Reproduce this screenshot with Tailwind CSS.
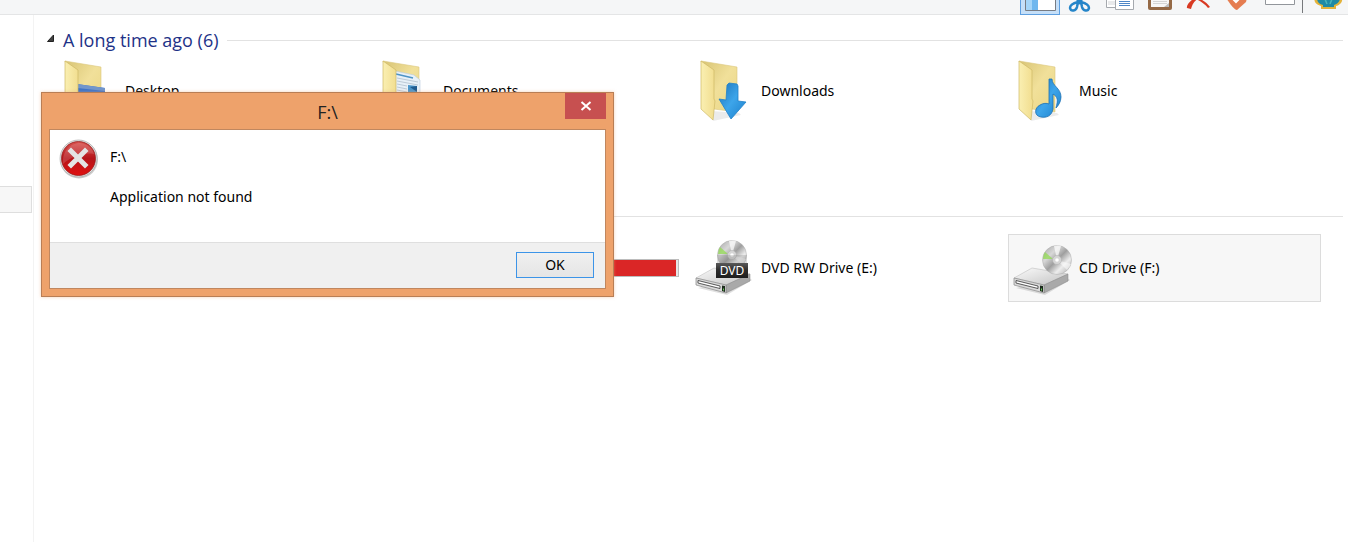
<!DOCTYPE html>
<html lang="en">
<head>
    <meta charset="UTF-8">
    <meta name="viewport" content="width=device-width, initial-scale=1.0">
    <title>File Explorer</title>
    <script src="https://cdn.jsdelivr.net/npm/@tailwindcss/browser@4"></script>
</head>
<body class="relative flex flex-col min-h-screen overflow-hidden bg-white text-black text-[14px] leading-5 font-['Noto_Sans','Open_Sans',sans-serif]">

    <!-- Shared gradients and shapes -->
    <svg class="absolute w-0 h-0" aria-hidden="true">
        <defs>
            <linearGradient id="cover" x1="0" x2="1"><stop offset="0" stop-color="#faefb2"/><stop offset="1" stop-color="#f1dd8e"/></linearGradient>
            <linearGradient id="back" x1="0" y1="0" x2="1" y2="1"><stop offset="0" stop-color="#d8c474"/><stop offset=".5" stop-color="#f1e09a"/><stop offset="1" stop-color="#ead684"/></linearGradient>
            <linearGradient id="blue" x1="0" y1="0" x2="1" y2="1"><stop offset="0" stop-color="#1c72b8"/><stop offset=".5" stop-color="#3da5ea"/><stop offset="1" stop-color="#1b7fcb"/></linearGradient>
            <linearGradient id="disc" x1="0" y1="0" x2="1" y2="1"><stop offset="0" stop-color="#a2a2a2"/><stop offset=".3" stop-color="#d8d8d8"/><stop offset=".5" stop-color="#9f9f9f"/><stop offset=".7" stop-color="#ededed"/><stop offset="1" stop-color="#a5a5a5"/></linearGradient>
            <linearGradient id="metal" x1="0" y1="0" x2="1" y2="1"><stop offset="0" stop-color="#fbfbfb"/><stop offset="1" stop-color="#c2c2c2"/></linearGradient>
            <linearGradient id="label" x1="0" y1="0" x2="0" y2="1"><stop offset="0" stop-color="#5a5a5a"/><stop offset=".5" stop-color="#2c2c2c"/><stop offset="1" stop-color="#1e1e1e"/></linearGradient>
            <linearGradient id="red" x1="0" y1="0" x2="0" y2="1"><stop offset="0" stop-color="#d8504c"/><stop offset=".5" stop-color="#b5151a"/><stop offset="1" stop-color="#e01010"/></linearGradient>
            <g id="folder-back">
                <path d="M16 52 43 54 45 56 17 62Z" fill="#000" opacity=".08"/>
                <path d="M5 2 41 8V53L18 50Z" fill="url(#back)" stroke="#dcc87e" stroke-width=".6"/>
            </g>
            <path id="folder-cover" d="M5 2 18 11V40L19 42 17 61 5 50Z" fill="url(#cover)" stroke="#cfb966" stroke-width=".7"/>
            <g id="drive">
                <path d="M4 52 33 59 58 44 52 40Z" fill="#000" opacity=".12"/>
                <path d="M2 42 20 32 56 38 32 49Z" fill="url(#metal)" stroke="#b5b5b5" stroke-width=".5"/>
                <path d="M32 49 56 38V45L32 57Z" fill="#a9a9a9" stroke="#858585" stroke-width=".5"/>
                <path d="M2 42 32 49V57L2 49Z" fill="#d9d9d9" stroke="#888" stroke-width=".7"/>
                <path d="M4 44.500 26 50V52.500L4 47Z" fill="#fff" stroke="#333" stroke-width=".8"/>
                <path d="M28 49.500 31 50V56L28 55Z" fill="#1d2b1d"/>
                <path d="M29 52.500h1v2h-1z" fill="#6bd35b"/>
            </g>
            <g id="cd">
                <circle r="14.500" fill="url(#disc)" stroke="#aaa" stroke-width=".5"/>
                <path d="M-4-1-14-1A14.500 14.500 0 0 1-12-8Z" fill="#8fdc4c" opacity=".7"/>
                <path d="M0 0-3-14A14.500 14.500 0 0 1 4-14Z" fill="#fff" opacity=".7"/>
                <path d="M0 0 14 4A14.500 14.500 0 0 1 10 10Z" fill="#fff" opacity=".5"/>
                <circle r="4.500" fill="#d5d5d5" stroke="#b2b2b2" stroke-width=".6"/>
                <circle r="1.800" fill="#fff"/>
            </g>
        </defs>
    </svg>

    <!-- Toolbar -->
    <header class="flex justify-end h-[15px] bg-[#f5f6f7] border-b border-[#e4e5e6]">
        <button aria-label="Preview pane" class="w-10 h-[15px] bg-[#c5dff8] border border-t-0 border-[#5e9fe0]">
            <svg class="block" width="38" height="14"><path d="M4.500-1H34.500V10.500H4.500Z" fill="#fff" stroke="#777c84"/><path d="M5 0h12v10H5z" fill="#6fb7ee"/><path d="M5 0h6v10H5z" fill="#a5d5f8"/></svg>
        </button>
        <button aria-label="Cut" class="w-10 h-[14px]">
            <svg class="block" width="40" height="14" fill="none" stroke="#2585c9" stroke-width="2.500"><path d="M16-2 21 4M23-2 18 4"/><path d="M18 2C14 3 10 5 10 8 11 12 16 11 17 7ZM21 2C25 3 29 5 29 8 28 12 23 11 22 7Z"/></svg>
        </button>
        <button aria-label="Copy" class="w-10 h-[14px]">
            <svg class="block" width="40" height="14" stroke="#a5a9ae" fill="#fff"><path d="M6.500-1H23V7.500H6.500Z"/><path d="M8 2h7M8 4h7" stroke="#d2d4d7"/><path d="M15.500-1H33.500V9.500H15.500Z"/><path d="M19 1.500H30M19 3.500H30M19 5.500H30" stroke="#4e86c6"/></svg>
        </button>
        <button aria-label="Paste" class="w-10 h-[14px]">
            <svg class="block" width="40" height="14"><path d="M8-2H32V8Q32 10 30 10H10Q8 10 8 8Z" fill="#946946"/><path d="M11-1H29V7H11Z" fill="#f7f7f7"/><path d="M13 1.500H27M13 3.500H27" stroke="#d5d5d5"/><path d="M24 7 29 3V7Z" fill="#bbb"/></svg>
        </button>
        <button aria-label="Delete" class="w-10 h-[14px]">
            <svg class="block" width="40" height="14"><path d="M19-2C14 1 12 5 11 9L7 8C6 5 11 0 15-2Z" fill="#d83a23"/><path d="M18-2C23 0 27 3 30 7L28 8C25 4 20 1 16-1Z" fill="#d83a23"/></svg>
        </button>
        <button aria-label="Properties" class="w-10 h-[14px]">
            <svg class="block" width="40" height="14"><path d="M6-2H27L26 2 17 10Q15 10 11 5Z" fill="#e57d51"/><path d="M12-2 16 2 20-2" fill="none" stroke="#fff" stroke-width="2"/></svg>
        </button>
        <button aria-label="Rename" class="w-10 h-[14px]">
            <svg class="block" width="40" height="14"><path d="M5.500-1H34.500V4.500H5.500Z" fill="#fff" stroke="#92969b"/></svg>
        </button>
        <div class="w-px h-[13px] mx-[2px] bg-[#77797c]"></div>
        <button aria-label="Shell options" class="w-[43px] h-[14px]">
            <svg class="block" width="43" height="14"><path d="M10-2H37C38 2 35 5 31 6V9H16V6C12 5 8 2 10-2Z" fill="#e3b33a"/><path d="M12-2H35C35 2 32 4 29 5V7H18V5C14 4 12 2 12-2Z" fill="#1f8aa5"/><path d="M20-1 22 4M27-1 25 4" stroke="#4bb5bb" stroke-width="1.500"/></svg>
        </button>
    </header>

    <div class="flex grow">
        <!-- Navigation pane -->
        <aside class="w-[34px] shrink-0 border-r border-[#f3f3f3]">
            <div class="w-8 h-[27px] mt-[171px] bg-[#f7f7f7] border border-l-0 border-[#dedede]"></div>
        </aside>

        <main class="grow pl-[11px] pr-[5px] pt-3">
            <!-- Folders -->
            <section class="h-[189px]">
                <h2 class="flex items-center h-[26px] text-[18px] leading-6 text-[#1e3287] font-['Open_Sans',sans-serif]">
                    <svg class="shrink-0 mr-2" width="10" height="12" aria-hidden="true"><path d="M8.500 1V7.500H2.500Z" fill="#404040" stroke="#222"/></svg>
                    A long time ago (6)
                    <span class="grow h-px ml-2 bg-[#e2e2e2]"></span>
                </h2>
                <ul class="grid grid-cols-[repeat(auto-fill,313px)] gap-x-[5px] pl-[9px] pt-1">
                    <li class="flex items-center h-[68px] pl-[6px]">
                        <svg class="w-16 h-16 mr-px" viewBox="0 0 64 64" aria-hidden="true"><use href="#folder-back"/><path d="M17 25 45 29V50L17 54Z" fill="#3b74cb"/><path d="M17 25 45 29V32L17 29Z" fill="#7196cc"/><use href="#folder-cover"/></svg>
                        Desktop
                    </li>
                    <li class="flex items-center h-[68px] pl-[6px]">
                        <svg class="w-16 h-16 mr-px" viewBox="0 0 64 64" aria-hidden="true"><use href="#folder-back"/><path d="M17 12 36 16 42 21V53L18 50Z" fill="#e7f0f8" stroke="#b9cbdc" stroke-width=".6"/><path d="M18 15 35 19" stroke="#4d94c6" stroke-width="1.500"/><path d="M19 19 40 23M19 22 40 26M19 25 29 27M19 28 29 30M19 31 29 33" stroke="#bccad7"/><path d="M30 26 39 27V39H30Z" fill="#4b96cb"/><path d="M32 28 39 33V27Z" fill="#205b8f"/><use href="#folder-cover"/></svg>
                        Documents
                    </li>
                    <li class="flex items-center h-[68px] pl-[6px]">
                        <svg class="w-16 h-16 mr-px" viewBox="0 0 64 64" aria-hidden="true"><use href="#folder-back"/><use href="#folder-cover"/><path d="M31 26 33 24 41 25 42 27V42L50 43 35 60 23 40 30 41Z" fill="url(#blue)" stroke="#2182c9" stroke-width=".8"/></svg>
                        Downloads
                    </li>
                    <li class="flex items-center h-[68px] pl-[6px]">
                        <svg class="w-16 h-16 mr-px" viewBox="0 0 64 64" aria-hidden="true"><use href="#folder-back"/><use href="#folder-cover"/><path d="M35 20H38C38 27 47 29 47 38 47 43 44 47 42 49 44 41 44 38 39 35V50C38 57 32 59 27 58 20 57 20 49 26 46 29 44 33 44 35 45Z" fill="url(#blue)" stroke="#1d71b4" stroke-width=".8"/></svg>
                        Music
                    </li>
                </ul>
            </section>

            <!-- Devices and drives -->
            <section>
                <div class="h-px bg-[#e2e2e2]"></div>
                <ul class="grid grid-cols-[repeat(auto-fill,313px)] gap-x-[5px] pl-[9px] pt-[17px]">
                    <li class="flex items-center h-[68px] col-span-2 pr-[6px]">
                        <div class="grow h-[18px] ml-[318px] pr-[2px] bg-[#e6e6e6] border border-[#bcbcbc]">
                            <div class="h-full bg-[#da2626]"></div>
                        </div>
                    </li>
                    <li class="flex items-center h-[68px] pl-1">
                        <svg class="w-16 h-16 mr-[3px]" viewBox="0 0 64 64" aria-hidden="true"><use href="#drive"/><use href="#cd" x="38" y="19"/><path d="M23 19V27H53V19" fill="#777" opacity=".25"/><path d="M22 27H54V42H22Z" fill="url(#label)"/><text x="38" y="39" text-anchor="middle" fill="#fff" font-size="12" font-family="Noto Sans, sans-serif">DVD</text></svg>
                        DVD RW Drive (E:)
                    </li>
                    <li class="flex items-center h-[68px] pl-[3px] bg-[#f7f7f7] border border-[#dcdcdc]">
                        <svg class="w-16 h-16 mr-[3px]" viewBox="0 0 64 64" aria-hidden="true"><use href="#drive"/><use href="#cd" x="45" y="24"/></svg>
                        CD Drive (F:)
                    </li>
                </ul>
            </section>
        </main>
    </div>

    <!-- Error dialog -->
    <div role="dialog" aria-labelledby="dialogTitle" class="absolute left-[41px] top-[92px] w-[573px] px-[7px] pb-[7px] bg-[#eea26b] border border-[#b97e55] shadow-[0_0_3px_#eea26b80]">
        <div class="relative flex justify-center h-9">
            <h1 id="dialogTitle" class="pt-[7px] text-[18px] leading-6 text-[#222] font-['Open_Sans',sans-serif]">F:\</h1>
            <button aria-label="Close" class="absolute right-0 top-0 flex items-center justify-center w-[41px] h-[26px] bg-[#c75050]">
                <svg width="12" height="10" viewBox="0 0 12 10"><path d="M1.500 1 10.500 9M10.500 1 1.500 9" stroke="#fff" stroke-width="2"/></svg>
            </button>
        </div>
        <div class="border border-[#c0875f] bg-white">
            <div class="flex h-28 pl-[9px] pt-[9px]">
                <svg class="w-10 h-10 shrink-0 mr-[11px]" viewBox="0 0 40 40" aria-hidden="true">
                    <circle cx="20" cy="20.500" r="19" fill="#999" opacity=".5"/>
                    <circle cx="19.500" cy="19.500" r="18.500" fill="#e3e3e3" stroke="#aaa" stroke-width=".7"/>
                    <circle cx="19.500" cy="19.500" r="17" fill="url(#red)" stroke="#8e1515" stroke-width=".7"/>
                    <path d="M4 25C3 10 13 4 21 4 29 5 34 10 35 15 24 13 12 18 4 25Z" fill="#fff" opacity=".15"/>
                    <path d="M12 12 26 26M26 12 12 26" stroke="#e4e4e4" stroke-width="5" stroke-linecap="square"/>
                </svg>
                <div class="pt-2">
                    <p class="mb-5">F:\</p>
                    <p>Application not found</p>
                </div>
            </div>
            <div class="flex justify-end h-[46px] pt-[9px] pr-[11px] bg-[#f0f0f0] border-t border-[#dfdfdf]">
                <button class="w-[78px] h-[26px] bg-linear-to-b from-[#f0f0f0] to-[#e5e5e5] border border-[#3c94e8]">OK</button>
            </div>
        </div>
    </div>

</body>
</html>
